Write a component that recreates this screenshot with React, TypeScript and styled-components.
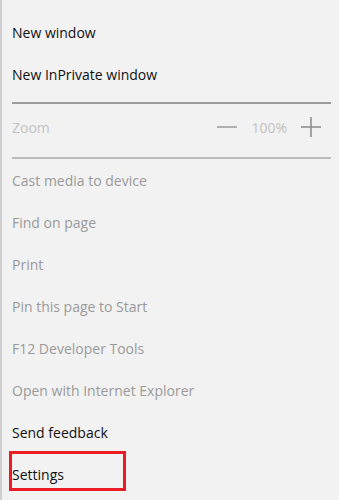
import React from "react";
import styled, { createGlobalStyle } from "styled-components";

const Global = createGlobalStyle`
  html, body { margin: 0; padding: 0; background: #f2f2f2; }
  body { font-family: "Open Sans", "Noto Sans", Arial, sans-serif; }
`;

const Panel = styled.div`
  width: 339px;
  height: 500px;
  box-sizing: border-box;
  border-left: 2px solid #cfcfcf;
  padding-top: 11px;
  background: #f2f2f2;
  display: flex;
  flex-direction: column;
  overflow: hidden;
`;

const Item = styled.div<{ $disabled?: boolean }>`
  position: relative;
  flex: none;
  height: 42px;
  display: flex;
  align-items: center;
  padding-left: 10px;
  font-size: 14px;
  color: ${(p) => (p.$disabled ? "#9a9a9a" : "#111")};
`;

const Separator = styled.div<{ $tone: string }>`
  flex: none;
  height: 1px;
  margin: 7px 8px 0 10px;
  background: ${(p) => p.$tone};
  border-bottom: 1px solid ${(p) => p.$tone}88;
`;

const ZoomRow = styled.div`
  flex: none;
  height: 46px;
  display: flex;
  align-items: center;
  padding-left: 10px;
  padding-right: 18px;
  font-size: 14px;
  color: #c2c2c2;
`;

const ZoomLabel = styled.span`
  flex: 1;
`;

const ZoomControls = styled.div`
  display: flex;
  align-items: center;
  gap: 14px;
`;

const Percent = styled.span`
  color: #c2c2c2;
  font-size: 14px;
`;

const Highlight = styled.div`
  position: absolute;
  left: 7px;
  top: -2px;
  width: 117px;
  height: 40px;
  box-sizing: border-box;
  border: 3px solid #ec1c24;
`;

const Minus = () => (
  <svg width="20" height="20" viewBox="0 0 20 20">
    <line x1="0" y1="10" x2="20" y2="10" stroke="#9a9a9a" strokeWidth="1.5" />
  </svg>
);

const Plus = () => (
  <svg width="20" height="20" viewBox="0 0 20 20">
    <line x1="0" y1="10" x2="20" y2="10" stroke="#8a8a8a" strokeWidth="1.5" />
    <line x1="10" y1="0" x2="10" y2="20" stroke="#8a8a8a" strokeWidth="1.5" />
  </svg>
);

export default function App() {
  return (
    <>
      <Global />
      <Panel>
        <Item>New window</Item>
        <Item>New InPrivate window</Item>
        <Separator $tone="#9c9c9c" />
        <ZoomRow>
          <ZoomLabel>Zoom</ZoomLabel>
          <ZoomControls>
            <Minus />
            <Percent>100%</Percent>
            <Plus />
          </ZoomControls>
        </ZoomRow>
        <Separator $tone="#bdbdbd" />
        <Item $disabled>Cast media to device</Item>
        <Item $disabled>Find on page</Item>
        <Item $disabled>Print</Item>
        <Item $disabled>Pin this page to Start</Item>
        <Item $disabled>F12 Developer Tools</Item>
        <Item $disabled>Open with Internet Explorer</Item>
        <Item>Send feedback</Item>
        <Item>
          Settings
          <Highlight />
        </Item>
      </Panel>
    </>
  );
}
